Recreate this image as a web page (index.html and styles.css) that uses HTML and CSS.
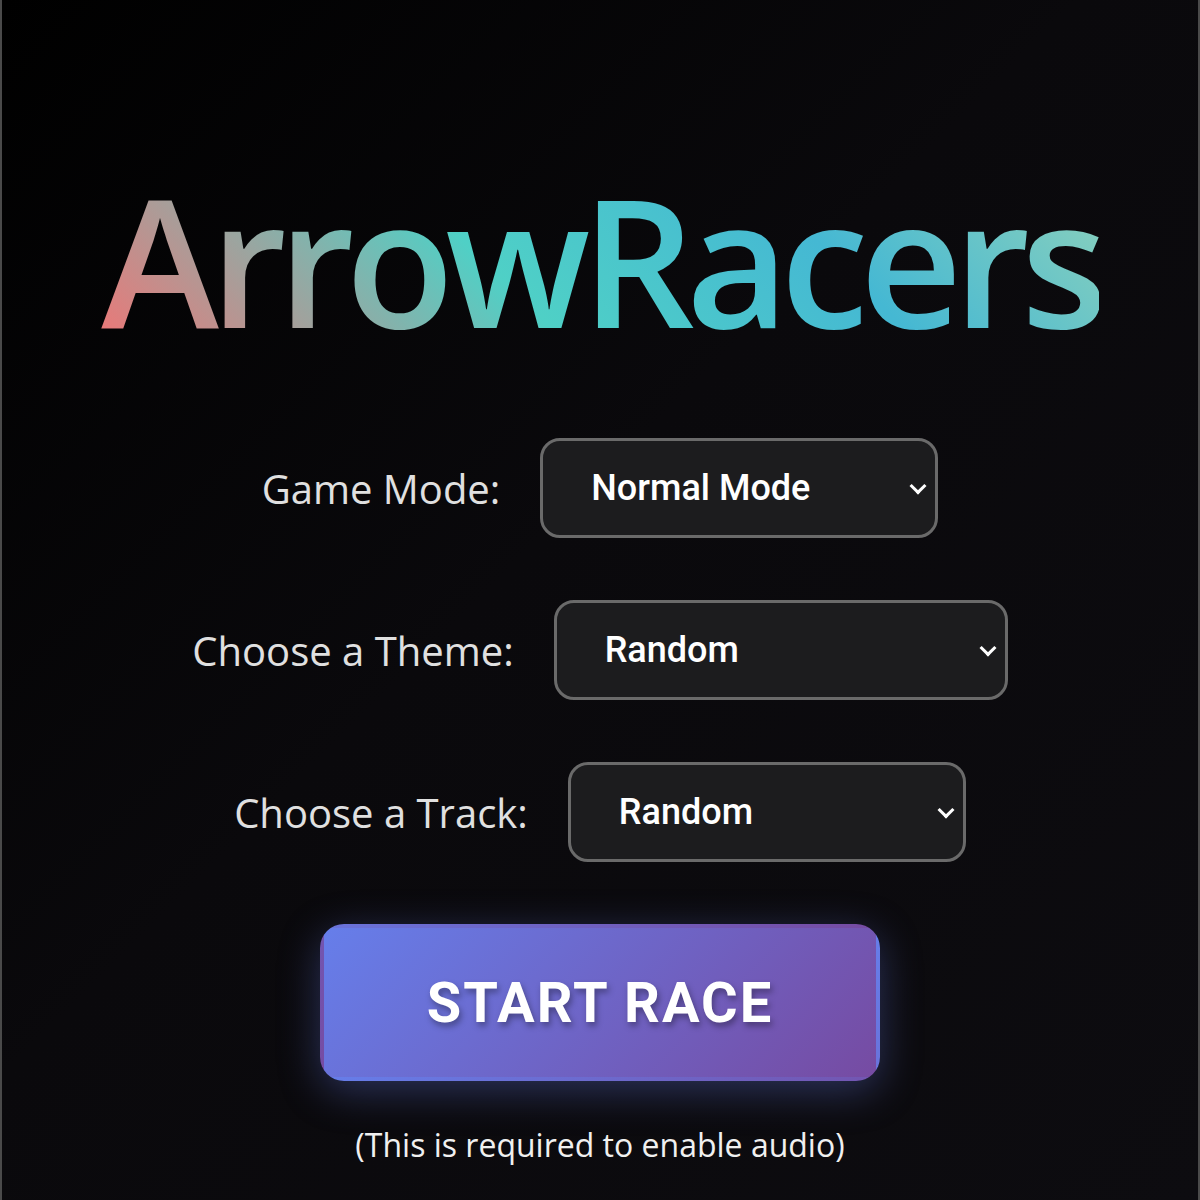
FILE: index.html
```html
<!DOCTYPE html>
<html lang="en">
<head>
    <meta charset="UTF-8">
    <meta name="viewport" content="width=device-width, initial-scale=1.0">
    <title>ArrowRacers</title>
    <link rel="stylesheet" href="styles.css">
</head>
<body>
    <div class="screen">
        <h1 class="title">ArrowRacers</h1>

        <div class="options">
            <div class="option-row">
                <label for="mode">Game Mode:</label>
                <div class="select-wrap">
                    <select id="mode" class="mode-select">
                        <option>Normal Mode</option>
                        <option>Time Trial</option>
                    </select>
                </div>
            </div>
            <div class="option-row">
                <label for="theme">Choose a Theme:</label>
                <div class="select-wrap">
                    <select id="theme" class="theme-select">
                        <option>Random</option>
                        <option>Neon City</option>
                        <option>Desert Sunset</option>
                    </select>
                </div>
            </div>
            <div class="option-row">
                <label for="track">Choose a Track:</label>
                <div class="select-wrap">
                    <select id="track" class="track-select">
                        <option>Random</option>
                        <option>Oval</option>
                        <option>Figure Eight</option>
                    </select>
                </div>
            </div>
        </div>

        <button class="start-btn">START RACE</button>
        <p class="note">(This is required to enable audio)</p>
    </div>
</body>
</html>
```

FILE: styles.css
```css
* {
    box-sizing: border-box;
}

html, body {
    margin: 0;
    height: 100%;
}

body {
    background: linear-gradient(135deg, #000000 0%, #0a090c 45%, #0d0c10 100%);
    font-family: 'Open Sans', sans-serif;
    color: #e2e2e2;
}

.screen {
    height: 100%;
    border-left: 2px solid #4a4a4a;
    border-right: 2px solid #4a4a4a;
    display: flex;
    flex-direction: column;
    align-items: center;
    padding-top: 170px;
}

.title {
    margin: 0;
    font-size: 178px;
    font-weight: 600;
    line-height: 1;
    letter-spacing: -9px;
    background: linear-gradient(45deg, #ee7676 0%, #4fd0c6 40%, #45b8d3 70%, #8fd2bb 100%);
    -webkit-background-clip: text;
    background-clip: text;
    color: transparent;
}

.options {
    margin-top: 90px;
    display: flex;
    flex-direction: column;
    align-items: center;
    gap: 62px;
}

.option-row {
    display: flex;
    align-items: center;
    gap: 40px;
}

.option-row label {
    font-size: 40px;
    color: #e0e0e0;
}

.select-wrap {
    position: relative;
}

/* chevron drawn over the select */
.select-wrap::after {
    content: '';
    position: absolute;
    right: 14px;
    top: 50%;
    width: 9px;
    height: 9px;
    margin-top: -8px;
    border-right: 3px solid #ffffff;
    border-bottom: 3px solid #ffffff;
    transform: rotate(45deg);
    pointer-events: none;
}

.select-wrap select {
    display: block;
    height: 100px;
    padding: 0 48px;
    font-family: Roboto, sans-serif;
    font-size: 36px;
    font-weight: 500;
    color: #ffffff;
    background-color: #1c1c1e;
    border: 3px solid #6a6a6a;
    border-radius: 20px;
    appearance: none;
    -webkit-appearance: none;
}

.mode-select {
    width: 398px;
}

.theme-select {
    width: 454px;
}

.track-select {
    width: 398px;
}

.start-btn {
    margin-top: 62px;
    width: 560px;
    height: 157px;
    border: 4px solid transparent;
    border-radius: 24px;
    background: linear-gradient(135deg, #667eea 0%, #764ba2 100%);
    box-shadow: 0 10px 40px rgba(102, 126, 234, 0.35);
    font-family: Roboto, sans-serif;
    font-size: 56px;
    font-weight: 700;
    letter-spacing: 2px;
    color: #ffffff;
    text-shadow: 2px 4px 6px rgba(0, 0, 0, 0.35);
    cursor: pointer;
}

.note {
    margin: 42px 0 0;
    font-size: 32px;
    color: #f0f0f0;
}
```
